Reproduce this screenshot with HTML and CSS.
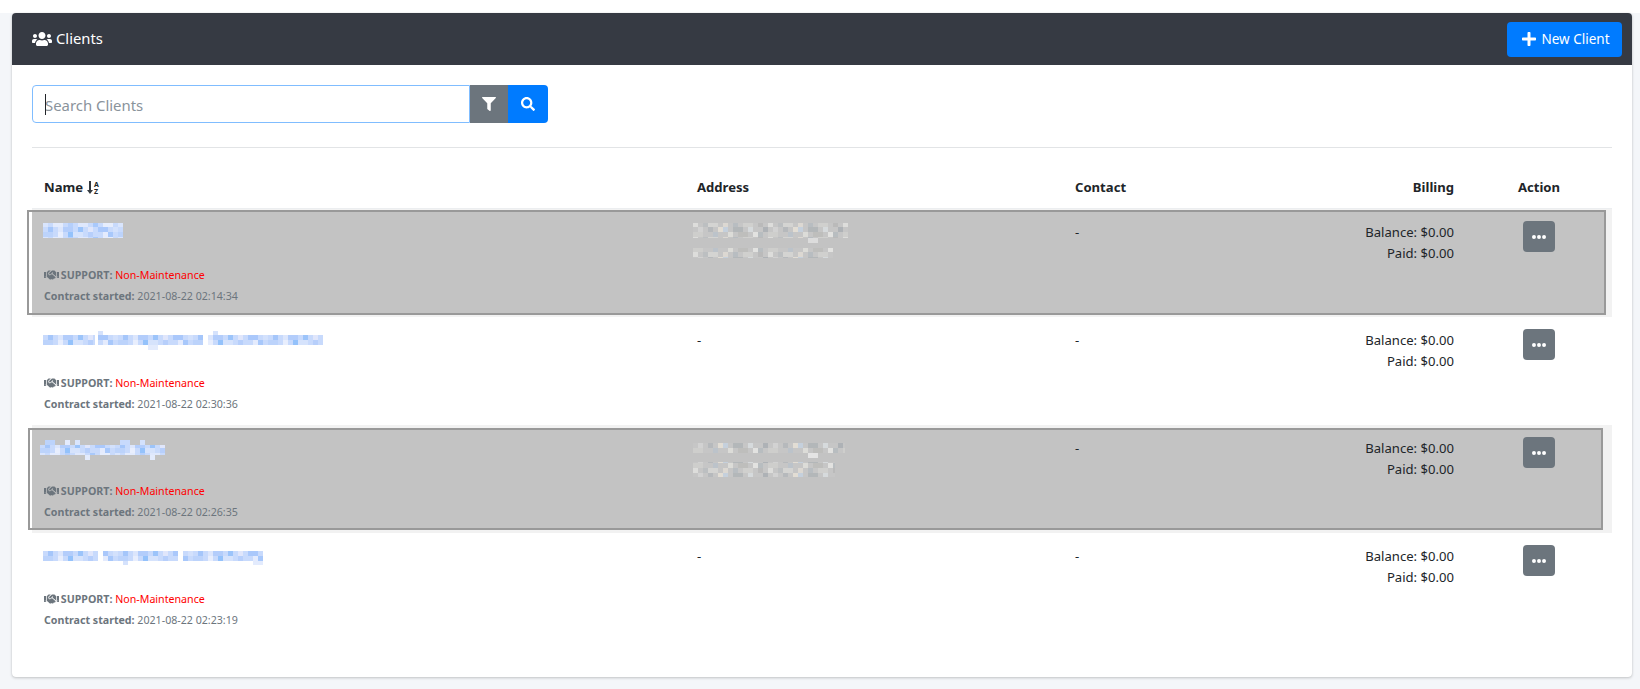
FILE: index.html
```html
<!DOCTYPE html>
<html lang="en">
<head>
<meta charset="utf-8">
<title>Clients</title>
<link rel="stylesheet" href="styles.css">
</head>
<body>
<svg class="defs" aria-hidden="true">
  <defs>
    <pattern id="blue" width="75" height="15" patternUnits="userSpaceOnUse">
      <rect width="75" height="15" fill="#c8dafc"/>
      <rect x="0" y="0" width="5" height="5" fill="#d9e5fd"/><rect x="10" y="0" width="10" height="5" fill="#e3ebfd"/><rect x="25" y="0" width="5" height="5" fill="#b5cffb"/><rect x="35" y="0" width="10" height="5" fill="#dfe8fd"/><rect x="50" y="0" width="5" height="5" fill="#a9c9fb"/><rect x="60" y="0" width="10" height="5" fill="#e6edfd"/>
      <rect x="5" y="5" width="5" height="5" fill="#a5c6fa"/><rect x="15" y="5" width="5" height="5" fill="#dce6fc"/><rect x="20" y="5" width="10" height="5" fill="#b3cdfb"/><rect x="35" y="5" width="5" height="5" fill="#9cc4fa"/><rect x="45" y="5" width="5" height="5" fill="#e0e6fb"/><rect x="55" y="5" width="10" height="5" fill="#aac8fb"/><rect x="70" y="5" width="5" height="5" fill="#d3e1fc"/>
      <rect x="0" y="10" width="10" height="5" fill="#bcd3fb"/><rect x="15" y="10" width="5" height="5" fill="#e8eefd"/><rect x="25" y="10" width="5" height="5" fill="#94c2fb"/><rect x="30" y="10" width="10" height="5" fill="#d6e3fc"/><rect x="45" y="10" width="5" height="5" fill="#b7cffb"/><rect x="60" y="10" width="5" height="5" fill="#e4ebfd"/><rect x="65" y="10" width="5" height="5" fill="#a8c8fb"/>
    </pattern>
    <pattern id="grey" width="75" height="15" patternUnits="userSpaceOnUse">
      <rect width="75" height="15" fill="#c6c6c6"/>
      <rect x="0" y="0" width="5" height="5" fill="#dddddb"/><rect x="10" y="0" width="5" height="5" fill="#bcbfc1"/><rect x="15" y="0" width="10" height="5" fill="#d4d4d2"/><rect x="30" y="0" width="5" height="5" fill="#dcd8d2"/><rect x="40" y="0" width="5" height="5" fill="#b8bdc1"/><rect x="50" y="0" width="10" height="5" fill="#d0d0ce"/><rect x="65" y="0" width="5" height="5" fill="#bababa"/>
      <rect x="5" y="5" width="5" height="5" fill="#d2d2d2"/><rect x="15" y="5" width="5" height="5" fill="#b6b9bc"/><rect x="25" y="5" width="5" height="5" fill="#e2ddd4"/><rect x="30" y="5" width="5" height="5" fill="#c5d0dc"/><rect x="40" y="5" width="10" height="5" fill="#b3b7b9"/><rect x="55" y="5" width="5" height="5" fill="#d6dadc"/><rect x="70" y="5" width="5" height="5" fill="#aeb2b6"/>
      <rect x="0" y="10" width="10" height="5" fill="#cececc"/><rect x="20" y="10" width="5" height="5" fill="#bcc3ca"/><rect x="35" y="10" width="5" height="5" fill="#dcdcd8"/><rect x="45" y="10" width="10" height="5" fill="#bebebc"/><rect x="60" y="10" width="5" height="5" fill="#e2e2e0"/><rect x="65" y="10" width="5" height="5" fill="#b8bdc0"/>
    </pattern>
    <symbol id="i-shake" viewBox="0 0 640 512"><path d="M434.7 64h-85.9c-8 0-15.7 3-21.6 8.4l-98.3 90c-.1.1-.2.3-.3.4-16.6 15.6-16.3 40.5-2.1 56 12.7 13.9 39.4 17.6 56.1 2.7.1-.1.3-.1.4-.2l79.9-73.2c6.5-5.9 16.7-5.5 22.6 1 6 6.5 5.5 16.6-1 22.6l-26.1 23.9L504 313.8c2.9 2.4 5.5 5 7.9 7.7V128l-54.6-54.6c-5.9-6-14.1-9.4-22.6-9.4zM544 128.2v223.9c0 17.7 14.3 32 32 32h64V128.2h-96zm48 223.9c-8.8 0-16-7.2-16-16s7.2-16 16-16 16 7.2 16 16-7.2 16-16 16zM0 384h64c17.7 0 32-14.3 32-32V128.2H0V384zm48-63.9c8.8 0 16 7.2 16 16s-7.2 16-16 16-16-7.2-16-16c0-8.9 7.2-16 16-16zm435.9 18.6L334.6 217.5l-30 27.5c-29.7 27.1-75.2 24.5-101.7-4.4-26.9-29.4-24.8-74.9 4.4-101.7L289.1 64h-83.8c-8.5 0-16.6 3.4-22.6 9.4L128 128v223.9h18.3l90.5 81.9c27.4 22.3 67.7 18.1 90-9.3l.2-.2 17.9 15.5c15.9 13 39.4 10.5 52.3-5.4l31.4-38.6 5.4 4.4c13.7 11.1 33.9 9.1 45-4.7l9.5-11.7c11.2-13.8 9.1-33.9-4.6-45.1z"/></symbol>
    <symbol id="i-dots" viewBox="0 0 512 512"><circle cx="72" cy="256" r="72"/><circle cx="256" cy="256" r="72"/><circle cx="440" cy="256" r="72"/></symbol>
  </defs>
</svg>
<div class="topstrip"></div>
<main class="page">
  <section class="card">
    <header class="card-head">
      <h1 class="card-title">
        <svg class="ic-users" viewBox="0 0 640 512"><path d="M96 224c35.3 0 64-28.7 64-64s-28.7-64-64-64-64 28.7-64 64 28.7 64 64 64zm448 0c35.3 0 64-28.7 64-64s-28.7-64-64-64-64 28.7-64 64 28.7 64 64 64zm32 32h-64c-17.6 0-33.5 7.1-45.1 18.6 40.3 22.1 68.9 62 75.1 109.4h66c17.7 0 32-14.3 32-32v-32c0-35.3-28.7-64-64-64zm-256 0c61.9 0 112-50.1 112-112S381.9 32 320 32 208 82.1 208 144s50.1 112 112 112zm76.8 32h-8.3c-20.8 10-43.9 16-68.5 16s-47.6-6-68.5-16h-8.3C179.6 288 128 339.6 128 403.2V432c0 26.5 21.5 48 48 48h288c26.5 0 48-21.5 48-48v-28.8c0-63.6-51.6-115.2-115.2-115.2zm-223.7-13.4C161.5 263.1 145.6 256 128 256H64c-35.3 0-64 28.7-64 64v32c0 17.7 14.3 32 32 32h65.9c6.3-47.4 34.9-87.3 75.2-109.4z"/></svg>
        Clients
      </h1>
      <button class="btn-new">
        <svg class="ic-plus" viewBox="0 0 448 512"><path d="M416 208H272V64c0-17.67-14.33-32-32-32h-32c-17.67 0-32 14.33-32 32v144H32c-17.67 0-32 14.33-32 32v32c0 17.67 14.33 32 32 32h144v144c0 17.67 14.33 32 32 32h32c17.67 0 32-14.33 32-32V304h144c17.67 0 32-14.33 32-32v-32c0-17.67-14.33-32-32-32z"/></svg>
        New Client
      </button>
    </header>
    <div class="card-body">
      <form class="search">
        <div class="search-input"><span class="caret"></span><span class="placeholder">Search Clients</span></div>
        <button type="button" class="search-btn filter"><svg class="ic-btn" viewBox="0 0 512 512"><path d="M487.976 0H24.028C2.71 0-8.047 25.866 7.058 40.971L192 225.941V432c0 7.831 3.821 15.17 10.237 19.662l80 55.98C298.02 518.69 320 507.493 320 487.98V225.941l184.947-184.97C520.021 25.896 509.338 0 487.976 0z"/></svg></button>
        <button type="button" class="search-btn go"><svg class="ic-btn" viewBox="0 0 512 512"><path d="M505 442.7L405.3 343c-4.5-4.5-10.6-7-17-7H372c27.6-35.3 44-79.7 44-128C416 93.1 322.9 0 208 0S0 93.1 0 208s93.1 208 208 208c48.3 0 92.7-16.4 128-44v16.3c0 6.4 2.5 12.5 7 17l99.7 99.7c9.4 9.4 24.6 9.4 33.9 0l28.3-28.3c9.4-9.4 9.4-24.6.1-34zM208 336c-70.7 0-128-57.2-128-128 0-70.7 57.2-128 128-128 70.7 0 128 57.2 128 128 0 70.7-57.2 128-128 128z"/></svg></button>
      </form>
      <hr class="rule">
      <div class="table">
        <div class="thead">
          <div class="th sort">Name
            <svg class="ic-arrow" viewBox="0 0 6 13"><path d="M2 0h2v9h2L3 13 0 9h2z"/></svg>
            <span class="az"><span>A</span><span>Z</span></span>
          </div>
          <div class="th">Address</div>
          <div class="th">Contact</div>
          <div class="th right">Billing</div>
          <div class="th center">Action</div>
        </div>

        <div class="row striped marked-a">
          <div class="td">
            <svg class="blur-name" width="80" height="21"><rect y="1" width="80" height="15" fill="url(#blue)"/></svg>
            <p class="meta first"><svg class="ic-shake"><use href="#i-shake"/></svg> <b>SUPPORT:</b> <span class="red">Non-Maintenance</span></p>
            <p class="meta"><b>Contract started:</b> 2021-08-22 02:14:34</p>
          </div>
          <div class="td">
            <svg class="blur-addr" width="155" height="42"><rect y="1" width="155" height="15" fill="url(#grey)"/><rect x="115" y="16" width="10" height="5" fill="#dcdcdc"/><rect y="26" width="140" height="10" fill="url(#grey)"/></svg>
          </div>
          <div class="td">-</div>
          <div class="td right">Balance: $0.00<br>Paid: $0.00</div>
          <div class="td center"><button class="btn-more"><svg class="ic-dots"><use href="#i-dots"/></svg></button></div>
        </div>

        <div class="row">
          <div class="td">
            <svg class="blur-name" width="280" height="21"><rect y="1" x="55" width="5" height="4" fill="#d5e2fc"/><rect y="1" x="170" width="5" height="4" fill="#d5e2fc"/><rect y="5" width="280" height="10" fill="url(#blue)"/><rect y="5" x="52" width="3" height="10" fill="#fff"/><rect y="5" x="160" width="5" height="10" fill="#fff"/><rect y="15" x="105" width="10" height="5" fill="#e3ebfd"/></svg>
            <p class="meta first"><svg class="ic-shake"><use href="#i-shake"/></svg> <b>SUPPORT:</b> <span class="red">Non-Maintenance</span></p>
            <p class="meta"><b>Contract started:</b> 2021-08-22 02:30:36</p>
          </div>
          <div class="td">-</div>
          <div class="td">-</div>
          <div class="td right">Balance: $0.00<br>Paid: $0.00</div>
          <div class="td center"><button class="btn-more"><svg class="ic-dots"><use href="#i-dots"/></svg></button></div>
        </div>

        <div class="row striped marked-b">
          <div class="td">
            <svg class="blur-name shift" width="125" height="24"><rect y="2" x="5" width="10" height="5" fill="#bcd3fb"/><rect y="2" x="25" width="5" height="5" fill="#e3ebfd"/><rect y="2" x="35" width="5" height="5" fill="#d9e5fd"/><rect y="2" x="80" width="10" height="5" fill="#c8dafc"/><rect y="2" x="100" width="5" height="5" fill="#d3e1fc"/><rect y="7" width="125" height="10" fill="url(#blue)"/><rect y="17" x="45" width="5" height="5" fill="#e3ebfd"/><rect y="17" x="110" width="5" height="5" fill="#e3ebfd"/></svg>
            <p class="meta first tight"><svg class="ic-shake"><use href="#i-shake"/></svg> <b>SUPPORT:</b> <span class="red">Non-Maintenance</span></p>
            <p class="meta"><b>Contract started:</b> 2021-08-22 02:26:35</p>
          </div>
          <div class="td">
            <svg class="blur-addr" width="155" height="42"><rect y="5" width="152" height="10" fill="url(#grey)"/><rect x="115" y="15" width="10" height="5" fill="#e4e4e4"/><rect y="24" width="142" height="15" fill="url(#grey)"/></svg>
          </div>
          <div class="td">-</div>
          <div class="td right">Balance: $0.00<br>Paid: $0.00</div>
          <div class="td center"><button class="btn-more"><svg class="ic-dots"><use href="#i-dots"/></svg></button></div>
        </div>

        <div class="row">
          <div class="td">
            <svg class="blur-name" width="220" height="21"><rect y="5" width="220" height="10" fill="url(#blue)"/><rect y="5" x="55" width="5" height="10" fill="#fff"/><rect y="5" x="135" width="5" height="10" fill="#fff"/><rect y="15" x="80" width="5" height="4" fill="#d5e2fc"/><rect y="15" x="210" width="10" height="4" fill="#e3ebfd"/></svg>
            <p class="meta first"><svg class="ic-shake"><use href="#i-shake"/></svg> <b>SUPPORT:</b> <span class="red">Non-Maintenance</span></p>
            <p class="meta"><b>Contract started:</b> 2021-08-22 02:23:19</p>
          </div>
          <div class="td">-</div>
          <div class="td">-</div>
          <div class="td right">Balance: $0.00<br>Paid: $0.00</div>
          <div class="td center"><button class="btn-more"><svg class="ic-dots"><use href="#i-dots"/></svg></button></div>
        </div>
      </div>
    </div>
  </section>
</main>
</body>
</html>
```
FILE: styles.css
```css
* { box-sizing: border-box; }
html, body { margin: 0; padding: 0; }
body {
  background: #f4f6f9;
  color: #212529;
  font-family: "Noto Sans", "Open Sans", sans-serif;
  font-size: 13.1px;
  line-height: 21px;
}
.defs { position: absolute; width: 0; height: 0; }
.topstrip { height: 13px; background: #fff; }
.page { padding: 0 8px 12px 12px; }

.card {
  background: #fff;
  border-radius: 4px;
  box-shadow: 0 0 1px rgba(0,0,0,.13), 0 1px 3px rgba(0,0,0,.2);
  overflow: hidden;
}
.card-head {
  height: 52px;
  background: #363a43;
  color: #fff;
  display: flex;
  align-items: center;
  justify-content: space-between;
  padding: 0 10px 0 20px;
}
.card-title {
  margin: 0 0 1px;
  font-size: 14.8px;
  font-weight: 400;
  display: flex;
  align-items: center;
  gap: 4px;
}
.ic-users { width: 20px; height: 16px; fill: #fff; }
.btn-new {
  width: 115px;
  height: 35px;
  padding: 0 0 0 3px;
  border: 0;
  border-radius: 4px;
  background: #007bff;
  color: #fff;
  font: inherit;
  font-size: 13.5px;
  display: flex;
  align-items: center;
  justify-content: center;
  gap: 5px;
}
.ic-plus { width: 14px; height: 16px; fill: #fff; }

.card-body { padding: 20px 20px 36px; }
.search { display: flex; width: 516px; height: 38px; }
.search-input {
  flex: 1;
  position: relative;
  display: flex;
  align-items: center;
  padding: 2px 0 0 12px;
  border: 1px solid #80bdff;
  border-radius: 4px 0 0 4px;
  background: #fff;
}
.caret { position: absolute; left: 12px; top: 8px; width: 1px; height: 21px; background: #212529; }
.placeholder { color: #8a939b; font-size: 14.9px; }
.search-btn {
  width: 38px;
  border: 0;
  padding: 0;
  color: #fff;
  display: flex;
  align-items: center;
  justify-content: center;
}
.search-btn.filter { background: #6c757d; }
.search-btn.go { width: 40px; background: #007bff; border-radius: 0 4px 4px 0; }
.ic-btn { width: 14px; height: 14px; fill: #fff; }
.rule { border: 0; border-top: 1px solid #e2e4e6; margin: 24px 0 18px; }

.thead, .row {
  display: grid;
  grid-template-columns: 653px 378px 187px 216px 1fr;
}
.thead { height: 43px; border-bottom: 1px solid #eceef0; }
.th { padding: 11px 12px 10px; font-weight: 700; color: #212529; }
.sort { display: flex; align-items: center; gap: 1px; }
.ic-arrow { width: 6px; height: 13px; fill: #343a40; margin-left: 3px; }
.az { display: flex; flex-direction: column; font-size: 7px; line-height: 7px; font-weight: 700; }
.right { text-align: right; }
.center { text-align: center; }

.row { height: 108px; position: relative; }
.row.striped { background: #f2f2f2; }
.marked-a::before, .marked-b::before {
  content: "";
  position: absolute;
  border: 2px solid #999;
  background: linear-gradient(90deg, #fff 3px, #c3c3c3 3px);
}
.marked-a::before { left: -5px; right: 6px; top: 1px; bottom: 2px; }
.marked-b::before { left: -4px; right: 9px; top: 3px; bottom: 3px; background: linear-gradient(90deg, #fff 2px, #c3c3c3 2px); }
.td { position: relative; padding: 13px 12px 11px; }
.blur-name { display: block; margin-left: -1px; shape-rendering: crispEdges; }
.blur-name.shift { margin-left: -4px; }
.blur-addr { display: block; margin-left: -4px; shape-rendering: crispEdges; }
.meta { margin: 0; font-size: 10.65px; line-height: 21px; color: #6c757d; white-space: nowrap; }
.meta.first { margin-top: 22px; }
.meta.first.tight { margin-top: 19px; }
.meta b { font-weight: 700; }
.red { color: #ff0000; }
.ic-shake { width: 15px; height: 12px; margin-right: -1px; fill: #6c757d; vertical-align: -2px; }
.btn-more {
  width: 32px;
  height: 31px;
  margin-top: -1px;
  padding: 0;
  border: 0;
  border-radius: 4px;
  background: #6c757d;
  display: inline-flex;
  align-items: center;
  justify-content: center;
}
.ic-dots { width: 14px; height: 14px; fill: #fff; }
```
